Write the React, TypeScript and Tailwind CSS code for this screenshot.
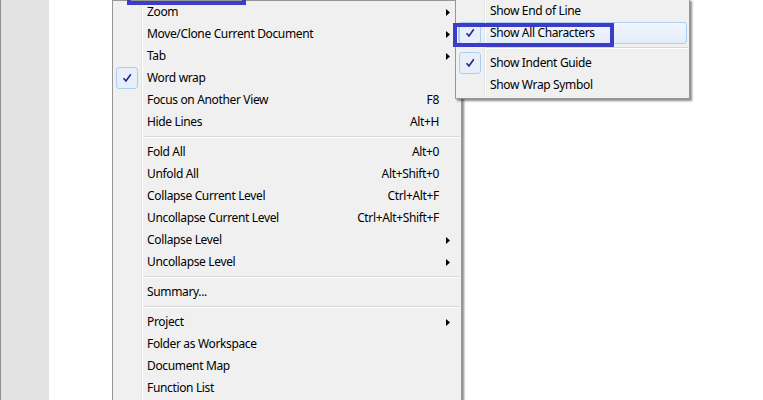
import React from "react";

type Item =
  | { kind: "sep" }
  | { kind: "item"; label: string; shortcut?: string; sub?: boolean; checked?: boolean; hot?: boolean };

const mainItems: Item[] = [
  { kind: "item", label: "Zoom", sub: true },
  { kind: "item", label: "Move/Clone Current Document", sub: true },
  { kind: "item", label: "Tab", sub: true },
  { kind: "item", label: "Word wrap", checked: true },
  { kind: "item", label: "Focus on Another View", shortcut: "F8" },
  { kind: "item", label: "Hide Lines", shortcut: "Alt+H" },
  { kind: "sep" },
  { kind: "item", label: "Fold All", shortcut: "Alt+0" },
  { kind: "item", label: "Unfold All", shortcut: "Alt+Shift+0" },
  { kind: "item", label: "Collapse Current Level", shortcut: "Ctrl+Alt+F" },
  { kind: "item", label: "Uncollapse Current Level", shortcut: "Ctrl+Alt+Shift+F" },
  { kind: "item", label: "Collapse Level", sub: true },
  { kind: "item", label: "Uncollapse Level", sub: true },
  { kind: "sep" },
  { kind: "item", label: "Summary..." },
  { kind: "sep" },
  { kind: "item", label: "Project", sub: true },
  { kind: "item", label: "Folder as Workspace" },
  { kind: "item", label: "Document Map" },
  { kind: "item", label: "Function List" },
];

const subItems: Item[] = [
  { kind: "item", label: "Show End of Line" },
  { kind: "item", label: "Show All Characters", checked: true, hot: true },
  { kind: "sep" },
  { kind: "item", label: "Show Indent Guide", checked: true },
  { kind: "item", label: "Show Wrap Symbol" },
];

function Check() {
  return (
    <svg width="12" height="12" viewBox="0 0 12 12">
      <path d="M2.5 6.2 L5 9 L9.8 2.2" fill="none" stroke="#23238c" strokeWidth="1.6" />
    </svg>
  );
}

function Arrow() {
  return (
    <svg width="4" height="7" viewBox="0 0 4 7" className="ml-[7px]">
      <path d="M0 0 L4 3.5 L0 7 Z" fill="#000" />
    </svg>
  );
}

function MenuRows({ items, showShortcuts }: { items: Item[]; showShortcuts: boolean }) {
  return (
    <>
      {items.map((it, i) =>
        it.kind === "sep" ? (
          <div key={i} className="flex h-[8px]">
            <div className="w-[29px] shrink-0 border-r border-[#e2e3e3] shadow-[1px_0_0_#ffffff]" />
            <div className="flex-1 flex items-center pl-[1px] pr-[1px]">
              <div className="w-full border-t border-[#d7d7d7] border-b border-b-white" />
            </div>
          </div>
        ) : (
          <div key={i} className="relative flex h-[22px] items-center">
            {it.hot ? (
              <div className="absolute left-[2px] right-[2px] top-0 bottom-0 rounded-[3px] border border-[#aecff7] bg-gradient-to-b from-[#f2f6fd] to-[#e3ecfa]" />
            ) : null}
            <div className="relative w-[29px] shrink-0 h-full flex items-center justify-center border-r border-[#e2e3e3] shadow-[1px_0_0_#ffffff]">
              {it.checked ? (
                <div className="w-[22px] h-[22px] rounded-[3px] border border-[#aeccf1] bg-[#e7effb] flex items-center justify-center">
                  <Check />
                </div>
              ) : null}
            </div>
            <div className="relative flex-1 pl-[5px] pb-[1px] text-black whitespace-nowrap">{it.label}</div>
            {showShortcuts ? (
              <>
                <div className="relative pb-[1px] text-black whitespace-nowrap">{it.shortcut ?? ""}</div>
                <div className="relative w-[22px] shrink-0 flex items-center">{it.sub ? <Arrow /> : null}</div>
              </>
            ) : null}
          </div>
        )
      )}
    </>
  );
}

export default function App() {
  return (
    <div
      className="relative w-[763px] h-[400px] overflow-hidden bg-white flex text-[12px] tracking-[-0.35px]"
      style={{ fontFamily: '"Noto Sans", "Open Sans", sans-serif' }}
    >
      <div className="w-[49px] h-full bg-[#e3e3e3] border-l border-[#8f8f8f]" />
      <div className="flex-1 h-full bg-white" />

      {/* main menu */}
      <div className="absolute left-[112px] top-0 w-[350px] h-[420px] bg-[#f0f0f0] border border-[#979797] shadow-[2px_2px_2px_rgba(0,0,0,0.45)]">
        <MenuRows items={mainItems} showShortcuts />
      </div>

      {/* submenu */}
      <div className="absolute left-[455px] top-[-1px] w-[235px] pb-[2px] bg-[#f0f0f0] border border-[#979797] shadow-[2px_2px_2px_rgba(0,0,0,0.45)]">
        <MenuRows items={subItems} showShortcuts={false} />
      </div>

      {/* annotation boxes */}
      <div className="absolute left-[127px] top-[-20px] w-[119px] h-[25px] border-[4px] border-[#3c3cc6]" />
      <div className="absolute left-[453px] top-[23px] w-[161px] h-[24px] border-[4px] border-[#3c3cc6]" />
    </div>
  );
}
